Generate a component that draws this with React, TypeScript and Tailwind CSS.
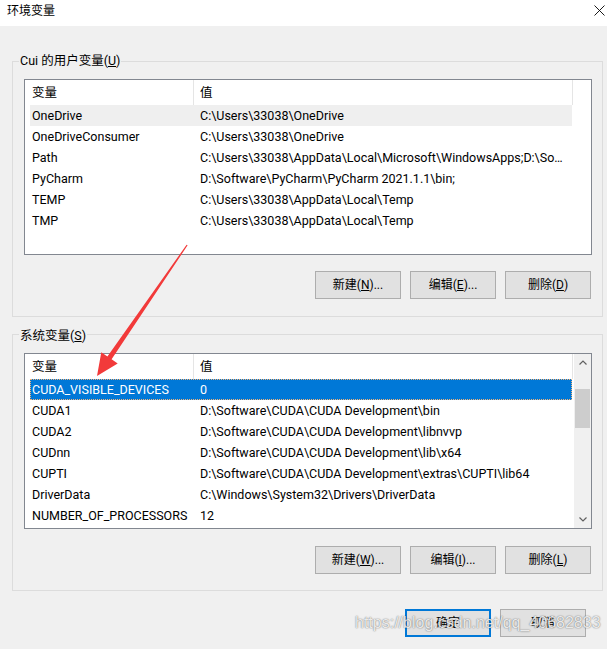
import React from 'react';

type Row = [string, string];

const userVars: Row[] = [
  ['OneDrive', 'C:\\Users\\33038\\OneDrive'],
  ['OneDriveConsumer', 'C:\\Users\\33038\\OneDrive'],
  ['Path', 'C:\\Users\\33038\\AppData\\Local\\Microsoft\\WindowsApps;D:\\Software\\PyCharm\\PyCharm 2021.1.1\\bin;'],
  ['PyCharm', 'D:\\Software\\PyCharm\\PyCharm 2021.1.1\\bin;'],
  ['TEMP', 'C:\\Users\\33038\\AppData\\Local\\Temp'],
  ['TMP', 'C:\\Users\\33038\\AppData\\Local\\Temp'],
];

const systemVars: Row[] = [
  ['CUDA_VISIBLE_DEVICES', '0'],
  ['CUDA1', 'D:\\Software\\CUDA\\CUDA Development\\bin'],
  ['CUDA2', 'D:\\Software\\CUDA\\CUDA Development\\libnvvp'],
  ['CUDnn', 'D:\\Software\\CUDA\\CUDA Development\\lib\\x64'],
  ['CUPTI', 'D:\\Software\\CUDA\\CUDA Development\\extras\\CUPTI\\lib64'],
  ['DriverData', 'C:\\Windows\\System32\\Drivers\\DriverData'],
  ['NUMBER_OF_PROCESSORS', '12'],
];

function Chevron({ up }: { up?: boolean }) {
  return (
    <svg width="8" height="5" viewBox="0 0 8 5" className="text-[#606060]">
      <path
        d={up ? 'M0.5 4.5 L4 1 L7.5 4.5' : 'M0.5 0.5 L4 4 L7.5 0.5'}
        fill="none"
        stroke="currentColor"
        strokeWidth="1.2"
      />
    </svg>
  );
}

function ListView({
  rows,
  hover,
  selected,
  scrollbar,
}: {
  rows: Row[];
  hover?: number;
  selected?: number;
  scrollbar?: boolean;
}) {
  return (
    <div className="flex h-[176px] w-[568px] border border-[#828790] bg-white">
      <div className="flex-1 overflow-hidden">
        <div className="flex h-[25px] w-[548px] text-black">
          <div className="flex w-[169px] items-center border-r border-[#e5e5e5] pl-[7px]">变量</div>
          <div className="flex w-[379px] items-center border-r border-[#e5e5e5] pl-[6px]">值</div>
        </div>
        {rows.map(([name, value], i) => {
          const isSel = i === selected;
          const isHover = i === hover;
          return (
            <div
              key={name}
              className={`ml-[5px] flex h-[21px] w-[542px] items-center ${
                isSel
                  ? 'bg-[#0078d7] text-white outline-1 -outline-offset-1 outline-dotted outline-[#f3b37a]'
                  : isHover
                  ? 'bg-[#efefef] text-black'
                  : 'text-black'
              }`}
            >
              <div className="w-[163px] shrink-0 truncate pl-[2px]">{name}</div>
              <div className="flex-1 truncate pl-[7px] pr-[7px]">{value}</div>
            </div>
          );
        })}
      </div>
      {scrollbar && (
        <div className="flex w-[17px] flex-col bg-[#f0f0f0]">
          <div className="flex h-[17px] items-center justify-center">
            <Chevron up />
          </div>
          <div className="flex-1">
            <div className="mx-[1px] mt-[18px] h-[39px] bg-[#cdcdcd]" />
          </div>
          <div className="flex h-[17px] items-center justify-center">
            <Chevron />
          </div>
        </div>
      )}
    </div>
  );
}

function Button({ children, primary }: { children: React.ReactNode; primary?: boolean }) {
  return (
    <button
      className={`flex h-[28px] w-[86px] items-center justify-center bg-[#e1e1e1] text-[12px] text-black ${
        primary ? 'border-2 border-[#0078d7]' : 'border border-[#adadad]'
      }`}
    >
      {children}
    </button>
  );
}

export default function App() {
  return (
    <div className="relative h-[649px] w-[607px] overflow-hidden bg-[#f0f0f0] font-[Roboto,'Noto_Sans_CJK_SC',sans-serif] text-[12.5px] leading-[16px] text-black">
      {/* title bar */}
      <div className="flex h-[26px] items-center justify-between bg-white pb-[5px] pl-[7px] pr-[2px]">
        <span className="text-[12px]">环境变量</span>
        <svg width="11" height="11" viewBox="0 0 11 11">
          <path d="M0.5 0.5 L10.5 10.5 M10.5 0.5 L0.5 10.5" stroke="#000" strokeWidth="0.9" />
        </svg>
      </div>

      {/* user variables */}
      <div className="ml-[12px] mt-[35px] w-[591px] border border-[#dcdcdc]">
        <div className="-mt-[9px] ml-[6px] w-fit bg-[#f0f0f0] px-[1px]">
          Cui 的用户变量(<u>U</u>)
        </div>
        <div className="ml-[11px] mt-[10px]">
          <ListView rows={userVars} hover={0} />
        </div>
        <div className="mt-[16px] flex justify-end gap-[9px] pb-[17px] pr-[11px]">
          <Button>新建(<u>N</u>)...</Button>
          <Button>编辑(<u>E</u>)...</Button>
          <Button>删除(<u>D</u>)</Button>
        </div>
      </div>

      {/* system variables */}
      <div className="ml-[12px] mt-[17px] w-[591px] border border-[#dcdcdc]">
        <div className="-mt-[7px] ml-[6px] w-fit bg-[#f0f0f0] px-[1px]">
          系统变量(<u>S</u>)
        </div>
        <div className="ml-[11px] mt-[9px]">
          <ListView rows={systemVars} selected={0} scrollbar />
        </div>
        <div className="mt-[17px] flex justify-end gap-[9px] pb-[16px] pr-[11px]">
          <Button>新建(<u>W</u>)...</Button>
          <Button>编辑(<u>I</u>)...</Button>
          <Button>删除(<u>L</u>)</Button>
        </div>
      </div>

      <div className="mt-[18px] flex justify-end gap-[9px] pr-[21px]">
        <Button primary>确定</Button>
        <Button>取消</Button>
      </div>

      {/* red annotation arrow */}
      <svg className="pointer-events-none absolute left-0 top-0" width="607" height="649">
        <polygon
          points="186.6,244.7 187.6,245.3 111.6,359.3 117.7,363.6 97,376 101.3,352.2 107.4,356.5"
          fill="#f23a3a"
        />
      </svg>

      {/* watermark */}
      <div className="pointer-events-none absolute left-[355px] top-[612px] font-['Liberation_Sans',sans-serif] text-[16px] leading-[22px] text-white/85 [text-shadow:0_0_1px_rgba(0,0,0,0.5),0_0_2px_rgba(0,0,0,0.25)]">
        https://blog.csdn.net/qq_40682833
      </div>
    </div>
  );
}
